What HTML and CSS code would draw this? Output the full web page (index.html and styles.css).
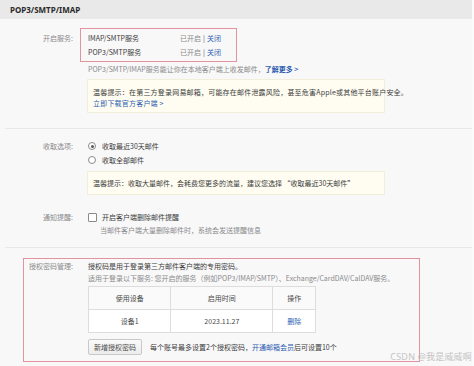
FILE: index.html
```html
<!DOCTYPE html>
<html>

<head>
    <title>POP3/SMTP/IMAP</title>
    <meta charset="utf-8">

    <link rel="stylesheet" href="styles.css">
</head>

<body>
    <div class="page">
        <div class="title_bar">POP3/SMTP/IMAP</div>

        <div class="section section_service">
            <div class="row">
                <div class="label label_service">开启服务:</div>
                <div class="field">
                    <div class="service_box">
                        <div class="service_line">
                            <span class="service_name">IMAP/SMTP服务</span>
                            <span class="state">已开启</span><span class="bar">|</span><a class="link">关闭</a>
                        </div>
                        <div class="service_line">
                            <span class="service_name">POP3/SMTP服务</span>
                            <span class="state">已开启</span><span class="bar">|</span><a class="link">关闭</a>
                        </div>
                    </div>
                    <div class="hint">POP3/SMTP/IMAP服务能让你在本地客户端上收发邮件，<a class="link strong">了解更多 &gt;</a></div>
                    <div class="tip tip_two">温馨提示：在第三方登录网易邮箱，可能存在邮件泄露风险，甚至危害Apple或其他平台账户安全。<br><a class="link">立即下载官方客户端 &gt;</a></div>
                </div>
            </div>
        </div>

        <div class="section section_options">
            <div class="row">
                <div class="label">收取选项:</div>
                <div class="field">
                    <div class="choice"><span class="radio checked"></span>收取最近30天邮件</div>
                    <div class="choice"><span class="radio"></span>收取全部邮件</div>
                    <div class="tip tip_one">温馨提示：收取大量邮件，会耗费您更多的流量，建议您选择 “收取最近30天邮件”</div>
                </div>
            </div>
            <div class="row row_notify">
                <div class="label">通知提醒:</div>
                <div class="field">
                    <div class="choice"><span class="checkbox"></span>开启客户端删除邮件提醒</div>
                    <div class="hint hint_indent">当邮件客户端大量删除邮件时，系统会发送提醒信息</div>
                </div>
            </div>
        </div>

        <div class="auth_box">
            <div class="row">
                <div class="label label_auth">授权密码管理:</div>
                <div class="field">
                    <div class="auth_line">授权码是用于登录第三方邮件客户端的专用密码。</div>
                    <div class="auth_line muted">适用于登录以下服务: 您开启的服务（例如POP3/IMAP/SMTP）、Exchange/CardDAV/CalDAV服务。</div>
                    <table class="auth_table">
                        <tr>
                            <th>使用设备</th>
                            <th>启用时间</th>
                            <th>操作</th>
                        </tr>
                        <tr>
                            <td>设备1</td>
                            <td>2023.11.27</td>
                            <td><a class="link">删除</a></td>
                        </tr>
                    </table>
                    <div class="auth_actions">
                        <button class="add_button" type="button">新增授权密码</button>
                        <span class="auth_note">每个账号最多设置2个授权密码，<a class="link">开通邮箱会员</a>后可设置10个</span>
                    </div>
                </div>
            </div>
        </div>
    </div>

    <div class="watermark">CSDN @我是威威啊</div>
</body>

</html>
```

FILE: styles.css
```css
:root {
    --text_color: #3c3c3c;
    --muted_color: #8a8a8a;
    --link_color: #2c5db0;
    --line_color: #e8e8e8;
    --mark_color: #e3939f;
    --tip_bg: #fffdf1;
    --tip_border: #f1eedc;
}

body {
    margin: 0px;
    background: #fbfbfb;
    color: var(--text_color);
    font-family: "Noto Sans CJK SC", "Noto Sans", sans-serif;
    font-size: 7px;
}

.page {
    position: relative;
    width: 472px;
    height: 366px;
    background: #f8f8f9;
}

.title_bar {
    height: 19px;
    line-height: 19px;
    padding-left: 10px;
    background: #e9e9e9;
    font-family: "Noto Sans", "Noto Sans CJK SC", sans-serif;
    font-size: 8px;
    font-weight: bold;
    color: #2a2a2a;
}

.section {
    margin-left: 5px;
    border-bottom: 1px solid var(--line_color);
}

.section_service {
    padding: 9px 0 15px 0;
}

.section_options {
    padding: 10px 0 10px 0;
}

.row {
    display: flex;
}

.row_notify {
    margin-top: 15px;
}

.label {
    width: 68px;
    padding-right: 15px;
    flex: 0 0 auto;
    text-align: right;
    line-height: 14px;
    color: var(--muted_color);
}

.label_service {
    padding-top: 3px;
}

.label_auth {
    width: 49px;
    line-height: 12px;
}

.field {
    flex: 1;
    line-height: 14px;
}

.service_box {
    width: 141px;
    margin-left: -8px;
    padding: 2px 7px;
    border: 1px solid var(--mark_color);
}

.service_line {
    display: flex;
    white-space: nowrap;
}

.service_name {
    width: 92px;
}

.state {
    color: var(--muted_color);
}

.bar {
    margin: 0 2px;
    color: #555;
}

.link {
    color: var(--link_color);
    text-decoration: none;
}

.strong {
    font-weight: bold;
}

.hint {
    color: var(--muted_color);
    white-space: nowrap;
}

.hint_indent {
    padding-left: 12px;
    line-height: 13px;
}

.tip {
    width: 286px;
    margin-left: -1px;
    background: var(--tip_bg);
    border: 1px solid var(--tip_border);
    white-space: nowrap;
}

.tip_two {
    margin-top: 3px;
    padding: 7px 5px 3px 5px;
    line-height: 11px;
    letter-spacing: 0.2px;
}

.tip_one {
    margin-top: 4px;
    padding: 5px 5px;
    line-height: 12px;
}

.choice {
    display: flex;
    align-items: center;
}

.radio {
    width: 6px;
    height: 6px;
    margin-right: 6px;
    border: 1px solid #8a8a8a;
    border-radius: 50%;
    background: #fff;
    position: relative;
}

.radio.checked::after {
    content: "";
    position: absolute;
    left: 1.5px;
    top: 1.5px;
    width: 3px;
    height: 3px;
    border-radius: 50%;
    background: #555;
}

.checkbox {
    width: 7px;
    height: 7px;
    margin-right: 5px;
    border: 1px solid #8a8a8a;
    border-radius: 1px;
    background: #fff;
}

.auth_box {
    width: 395px;
    margin: 10px 0 0 23px;
    padding: 1px 0 6px 0;
    border: 1px solid var(--mark_color);
}

.auth_line {
    line-height: 12px;
    white-space: nowrap;
}

.muted {
    color: var(--muted_color);
}

.auth_table {
    width: 228px;
    margin-top: 2px;
    border-collapse: collapse;
    background: #fff;
}

.auth_table th,
.auth_table td {
    height: 22px;
    padding: 0;
    border: 1px solid #dddddd;
    text-align: center;
    font-weight: normal;
    color: #4a4a4a;
}

.auth_table th {
    background: #fafafa;
}

.auth_actions {
    display: flex;
    align-items: center;
    margin-top: 6px;
}

.add_button {
    width: 54px;
    height: 16px;
    padding: 0;
    border: 1px solid #c8c8c8;
    border-radius: 2px;
    background: linear-gradient(#fafafa, #ececec);
    font-family: inherit;
    font-size: 7px;
    color: #4a4a4a;
}

.auth_note {
    margin-left: 8px;
    line-height: 12px;
    white-space: nowrap;
}

.watermark {
    position: absolute;
    right: 2px;
    top: 350px;
    font-family: "Noto Sans", "Noto Sans CJK SC", sans-serif;
    font-size: 9px;
    letter-spacing: 0.2px;
    color: #c4c4c4;
}
```
